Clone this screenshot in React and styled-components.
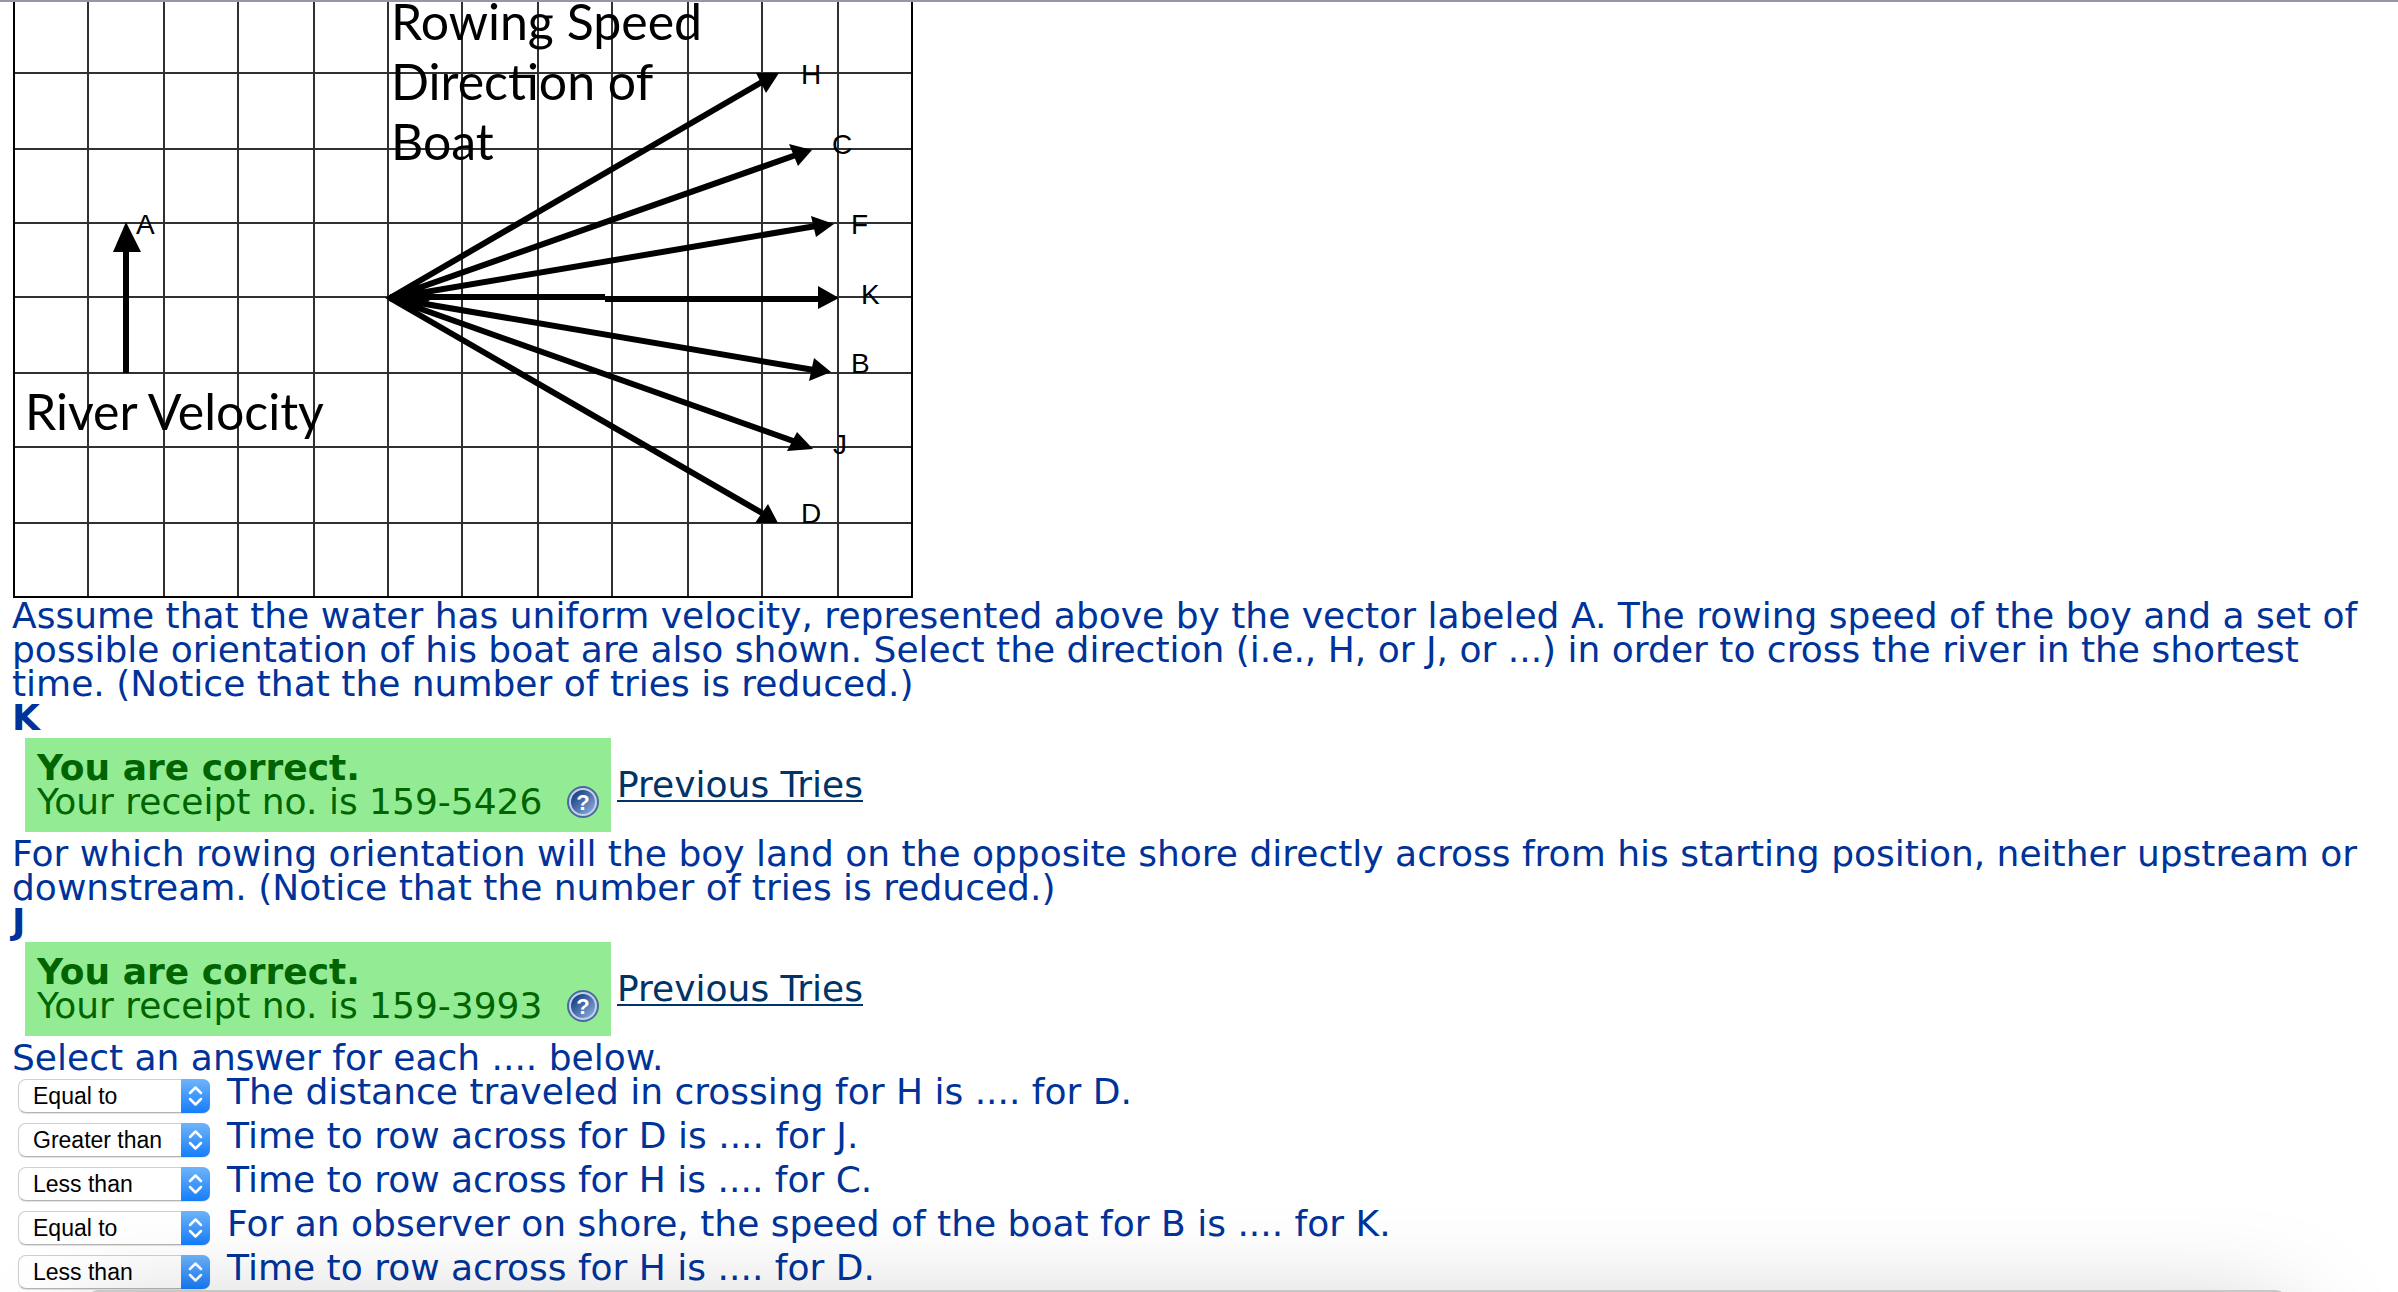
import React, { useState } from "react";
import styled, { createGlobalStyle } from "styled-components";

const GlobalStyle = createGlobalStyle`
  body {
    margin: 0;
    background-color: #fff;
    overflow: hidden;
  }
`;

const Page = styled.main`
  border-top: 2px solid #9797a3;
  padding: 0 12px;
  color: #003399;
  font-family: Verdana, "DejaVu Sans", sans-serif;
  font-size: 36px;
  line-height: 34px;
`;

const Diagram = styled.svg`
  display: block;
  width: 902px;
  height: 597px;
  .grid {
    stroke: #303030;
    stroke-width: 2;
  }
  .frame {
    fill: none;
    stroke: #000;
    stroke-width: 2;
  }
  .shaft {
    stroke: #000;
    stroke-width: 6;
  }
  .caption {
    font-family: Lato, sans-serif;
    font-size: 50px;
  }
  .label {
    font-family: "Liberation Sans", Arial, sans-serif;
    font-size: 28px;
  }
`;

const Question = styled.p`
  margin: 0;
`;

const Answer = styled.strong`
  display: block;
`;

const Result = styled.div`
  display: flex;
  align-items: center;
  gap: 6px;
  margin: 3px 0 5px 13px;
`;

const Correct = styled.div`
  min-width: 562px;
  padding: 13px 12px;
  background-color: #93ec94;
  color: #006400;
`;

const Receipt = styled.div`
  display: flex;
  align-items: center;
  justify-content: space-between;
  gap: 14px;
`;

const HelpLink = styled.a`
  display: flex;
  height: 32px;
`;

const TriesLink = styled.a`
  color: #003366;
  text-decoration: underline;
  text-decoration-thickness: 2px;
  text-underline-offset: 3px;
`;

const Row = styled.div`
  display: flex;
  align-items: flex-start;
  gap: 17px;
  height: 44px;
  padding-left: 6px;
`;

const SelectBox = styled.div`
  position: relative;
  margin-top: 4px;
  svg {
    position: absolute;
    top: 0;
    right: 0;
    pointer-events: none;
  }
`;

const Select = styled.select`
  display: block;
  appearance: none;
  width: 192px;
  height: 34px;
  padding: 0 32px 0 14px;
  border: 1px solid #d0d0d0;
  border-bottom-color: #b4b4b4;
  border-radius: 8px;
  background-color: #fff;
  box-shadow: 0 1px 1px rgba(0, 0, 0, 0.12);
  color: #000;
  font-family: "Liberation Sans", Helvetica, Arial, sans-serif;
  font-size: 23px;
`;

// top edge of the window lying in front, only its shadow is seen
const FrontWindow = styled.div`
  position: fixed;
  left: 88px;
  right: 112px;
  bottom: -298px;
  height: 300px;
  border-radius: 10px;
  background-color: #c8c8c8;
  box-shadow: 0 30px 110px rgba(0, 0, 0, 0.26);
  pointer-events: none;
`;

const gridX = [88, 164, 238, 314, 388, 462, 538, 612, 688, 762, 838];
const gridY = [73, 149, 223, 297, 373, 447, 523];

const vectors = [
  { name: "H", end: [762, 82], head: "779,73 756,73 766,93", label: [801, 84] },
  { name: "C", end: [796, 155], head: "812,150 789,144 798,166", label: [832, 154] },
  { name: "F", end: [816, 226], head: "834,224 811,216 816,237", label: [851, 234] },
  { name: "B", end: [814, 370], head: "831,372 814,358 809,381", label: [851, 373] },
  { name: "J", end: [796, 442], head: "813,449 797,432 787,451", label: [833, 454] },
  { name: "D", end: [762, 513], head: "778,523 768,504 755,523", label: [801, 523] },
];

const choices = ["Equal to", "Greater than", "Less than"];

const items = [
  { text: "The distance traveled in crossing for H is .... for D.", value: "Equal to" },
  { text: "Time to row across for D is .... for J.", value: "Greater than" },
  { text: "Time to row across for H is .... for C.", value: "Less than" },
  { text: "For an observer on shore, the speed of the boat for B is .... for K.", value: "Equal to" },
  { text: "Time to row across for H is .... for D.", value: "Less than" },
];

const VectorDiagram = () => (
  <Diagram viewBox="12 2 902 597" role="img" aria-label="River velocity and rowing directions">
    {gridX.map((x) => <line key={x} className="grid" x1={x} y1="0" x2={x} y2="597" />)}
    {gridY.map((y) => <line key={y} className="grid" x1="14" y1={y} x2="912" y2={y} />)}
    <path className="frame" d="M14 0V597H912V0" />

    <line className="shaft" x1="126" y1="373" x2="126" y2="245" />
    <polygon points="126,222 113,252 141,252" />
    <text className="label" x="136" y="234">A</text>
    <text className="caption" x="25" y="430">River Velocity</text>

    <text className="caption" x="391" y="40">Rowing Speed</text>
    <text className="caption" x="391" y="100">Direction of</text>
    <text className="caption" x="391" y="160">Boat</text>

    {vectors.map((v) => (
      <g key={v.name}>
        <line className="shaft" x1="390" y1="298" x2={v.end[0]} y2={v.end[1]} />
        <polygon points={v.head} />
        <text className="label" x={v.label[0]} y={v.label[1]}>{v.name}</text>
      </g>
    ))}
    <path className="shaft" fill="none" d="M390 297H605M605 299H820" />
    <polygon points="839,298 818,286 818,309" />
    <text className="label" x="861" y="304">K</text>
    <polygon points="385,298 416,281 432,298 416,313" />
  </Diagram>
);

const HelpIcon = () => (
  <svg width="32" height="32" viewBox="0 0 32 32">
    <defs>
      <linearGradient id="help" x1="0" y1="0" x2="1" y2="1">
        <stop offset="0.2" stopColor="#23498c" />
        <stop offset="1" stopColor="#8fb4e0" />
      </linearGradient>
    </defs>
    <circle cx="16" cy="16" r="15" fill="#c3d2ea" stroke="#4a69a0" strokeWidth="2" />
    <circle cx="16" cy="16" r="12" fill="url(#help)" />
    <text x="16" y="24" textAnchor="middle" fill="#fff" fontFamily="Liberation Sans, Arial, sans-serif" fontWeight="bold" fontSize="22">?</text>
  </svg>
);

const ResultRow = ({ receipt }) => (
  <Result>
    <Correct>
      <strong>You are correct.</strong>
      <Receipt>
        <span>Your receipt no. is {receipt}</span>
        <HelpLink href="#help" aria-label="Help"><HelpIcon /></HelpLink>
      </Receipt>
    </Correct>
    <TriesLink href="#tries">Previous Tries</TriesLink>
  </Result>
);

const AnswerRow = ({ id, text, initial }) => {
  const [value, setValue] = useState(initial);

  return (
    <Row>
      <SelectBox>
        <Select id={id} value={value} onChange={(e) => setValue(e.target.value)}>
          {choices.map((c) => <option key={c}>{c}</option>)}
        </Select>
        <svg width="29" height="34" viewBox="0 0 29 34">
          <defs>
            <linearGradient id={`${id}-blue`} x1="0" y1="0" x2="0" y2="1">
              <stop offset="0" stopColor="#6fb4f9" />
              <stop offset="1" stopColor="#157dfc" />
            </linearGradient>
          </defs>
          <path d="M0 0H21Q29 0 29 8V26Q29 34 21 34H0Z" fill={`url(#${id}-blue)`} />
          <path d="M9 14L14.500 8.500L20 14M9 20L14.500 25.500L20 20" fill="none" stroke="#fff" strokeWidth="2.500" strokeLinecap="round" strokeLinejoin="round" />
        </svg>
      </SelectBox>
      <label htmlFor={id}>{text}</label>
    </Row>
  );
};

const App = () => {
  return (
    <>
      <GlobalStyle />
      <Page>
        <VectorDiagram />
        <Question>
          Assume that the water has uniform velocity, represented above by the vector labeled A. The rowing speed of the boy and a set of possible orientation of his boat are also shown. Select the direction (i.e., H, or J, or ...) in order to cross the river in the shortest time. (Notice that the number of tries is reduced.)
        </Question>
        <Answer>K</Answer>
        <ResultRow receipt="159-5426" />
        <Question>
          For which rowing orientation will the boy land on the opposite shore directly across from his starting position, neither upstream or downstream. (Notice that the number of tries is reduced.)
        </Question>
        <Answer>J</Answer>
        <ResultRow receipt="159-3993" />
        <Question>Select an answer for each .... below.</Question>
        {items.map((item, i) => (
          <AnswerRow key={i} id={`item-${i}`} text={item.text} initial={item.value} />
        ))}
      </Page>
      <FrontWindow />
    </>
  );
};

export default App;
